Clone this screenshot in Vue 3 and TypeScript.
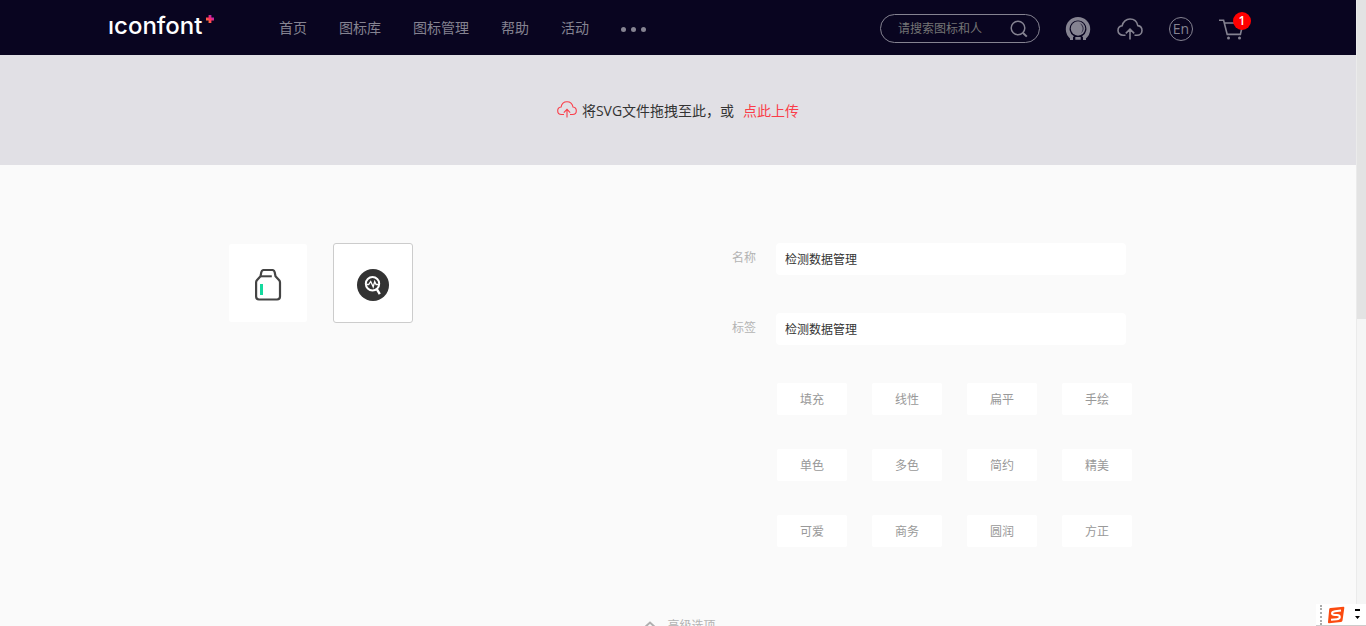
<script setup lang="ts">
import { ref } from 'vue'

interface NavItem {
  label: string
  href: string
}

const navItems: NavItem[] = [
  { label: '首页', href: '#home' },
  { label: '图标库', href: '#library' },
  { label: '图标管理', href: '#manage' },
  { label: '帮助', href: '#help' },
  { label: '活动', href: '#events' },
]

const tags: string[] = [
  '填充', '线性', '扁平', '手绘',
  '单色', '多色', '简约', '精美',
  '可爱', '商务', '圆润', '方正',
]

const keyword = ref('')
const iconName = ref('检测数据管理')
const iconTags = ref('检测数据管理')
const selectedIcon = ref(1)
const chosen = ref<string[]>([])

function toggleTag(tag: string): void {
  chosen.value = chosen.value.includes(tag)
    ? chosen.value.filter((t) => t !== tag)
    : [...chosen.value, tag]
}
</script>

<template>
  <div class="window">
    <div class="page">
      <header class="header">
        <div class="header-inner">
          <a class="logo" href="#home" aria-label="iconfont+">
            <span>ıconfont</span>
            <svg class="logo-plus" width="8" height="8" viewBox="0 0 8 8" aria-hidden="true">
              <defs>
                <linearGradient id="plus" x1="0" y1="1" x2="1" y2="0">
                  <stop offset="0.1" stop-color="#ff8a2a" />
                  <stop offset="0.5" stop-color="#ff2f63" />
                  <stop offset="0.9" stop-color="#a01fd0" />
                </linearGradient>
              </defs>
              <path d="M2.6 0h2.8v2.6H8v2.8H5.4V8H2.6V5.4H0V2.6h2.6z" fill="url(#plus)" />
            </svg>
          </a>
          <nav class="nav">
            <a v-for="item in navItems" :key="item.label" :href="item.href">{{ item.label }}</a>
            <button class="more" type="button" aria-label="更多">
              <i></i><i></i><i></i>
            </button>
          </nav>
          <form class="search" @submit.prevent>
            <input v-model="keyword" type="text" placeholder="请搜索图标和人" aria-label="搜索" />
            <button type="submit" aria-label="搜索">
              <svg width="18" height="18" viewBox="0 0 18 18" fill="none" stroke="#858391">
                <circle cx="8" cy="8" r="6.8" stroke-width="1.5" />
                <path d="M12.8 12.8l4 3.8" stroke-width="2" />
              </svg>
            </button>
          </form>
          <div class="tools">
            <a href="#me" aria-label="我的">
              <svg width="26" height="26" viewBox="0 0 26 26">
                <path d="M5 22.500A12.200 12.200 0 1 1 21 22.500V24h-3v-2.800l-1-.9a8.400 8.400 0 1 0-8 0l-1 .9V24H5z" fill="#858391" />
                <circle cx="13" cy="12.500" r="7.200" fill="#858391" />
                <path d="M14.500 7.200c2.800.8 4.300 3 4.100 5.600-.2 2.300-1.400 3.800-3 4.600 1.500-1.500 2-3 2-4.800 0-2.200-1.100-4-3.100-5.400z" fill="#2b2840" />
                <path d="M10.300 21h5.400v2.800h-5.400z" fill="#858391" />
              </svg>
            </a>
            <a href="#upload" aria-label="上传">
              <svg width="26" height="22" viewBox="0 0 26 22" fill="none" stroke="#858391" stroke-width="1.600">
                <path d="M8.500 17.200H6.200C3.200 17.200 1 15.200 1 12.400 1 9.800 2.800 8 5.200 7.700 5.900 3.800 9.200 1 13 1s7 2.600 7.800 6.600c2.400.3 4.200 2.200 4.200 4.800 0 2.800-2.200 4.800-5 4.800h-2.500M13 21.500V11.500M8.800 15.400L13 11.200l4.200 4.200" />
              </svg>
            </a>
            <a class="lang" href="#en">En</a>
            <a class="cart" href="#cart" aria-label="购物车">
              <svg width="25" height="22" viewBox="0 0 25 22" fill="none" stroke="#858391" stroke-width="1.600">
                <path d="M0 2.200h4.600L8.200 16.400h13.200L24 5H5.800" />
                <circle cx="9.500" cy="20" r="1.500" fill="#858391" stroke="none" />
                <circle cx="20.500" cy="20" r="1.500" fill="#858391" stroke="none" />
              </svg>
              <span class="badge">1</span>
            </a>
          </div>
        </div>
      </header>

      <section class="dropzone">
        <svg width="20" height="18" viewBox="0 0 20 18" fill="none" stroke="#fa3d49" stroke-width="1.100">
          <path d="M7 13.500H4.600C2.300 13.500.7 11.900.7 9.700c0-2 1.400-3.500 3.400-3.700C4.600 3 7 .8 10 .8s5.400 2 6 5.200c1.900.2 3.300 1.700 3.300 3.700 0 2.200-1.600 3.800-3.800 3.800H13M10 16.500V8.500M6.800 11.600L10 8.400l3.200 3.200" />
        </svg>
        <span class="drop-text">将SVG文件拖拽至此，或</span>
        <a href="#pick">点此上传</a>
      </section>

      <main class="editor">
        <div class="icons">
          <button
            type="button"
            :class="['icon-card', { active: selectedIcon === 0 }]"
            aria-label="瓶子"
            @click="selectedIcon = 0"
          >
            <svg width="32" height="32" viewBox="0 0 32 32" fill="none">
              <path d="M8.500 7.300L9.300 3.200Q9.800 1 12 1h8q2.200 0 2.700 2.200l.8 4.100 3.700 3.900q.8.9.8 2.200v14.200q0 2.900-2.900 2.900H7q-2.900 0-2.900-2.900V13.400q0-1.300.8-2.200z" stroke="#444" stroke-width="2.200" />
              <path d="M9 7.300h10.800" stroke="#444" stroke-width="2" />
              <path d="M8 15h3v11H8z" fill="#14d99e" />
            </svg>
          </button>
          <button
            type="button"
            :class="['icon-card', { active: selectedIcon === 1 }]"
            aria-label="检测数据管理"
            @click="selectedIcon = 1"
          >
            <svg width="32" height="32" viewBox="0 0 32 32" fill="none">
              <circle cx="16" cy="16" r="16" fill="#333" />
              <circle cx="15.500" cy="14.800" r="6.700" stroke="#fff" stroke-width="2" />
              <path d="M9.500 15.500h2.200l2-3 2.500 5.300 1.500-5.300 1.400 3h2.400" stroke="#fff" stroke-width="1.300" />
              <path d="M19.800 20.200l3 5" stroke="#fff" stroke-width="2.400" />
            </svg>
          </button>
        </div>

        <form class="form" @submit.prevent>
          <label for="icon-name">名称</label>
          <input id="icon-name" v-model="iconName" type="text" />
          <label for="icon-tags">标签</label>
          <input id="icon-tags" v-model="iconTags" type="text" />
          <div class="tags">
            <button
              v-for="tag in tags"
              :key="tag"
              type="button"
              :aria-pressed="chosen.includes(tag)"
              @click="toggleTag(tag)"
            >{{ tag }}</button>
          </div>
        </form>
      </main>

      <button class="advanced" type="button">
        <svg width="16" height="10" viewBox="0 0 16 10" fill="none" stroke="#b0b0b0" stroke-width="2">
          <path d="M1 8L8 1.500 15 8" />
        </svg>
        <span>高级选项</span>
      </button>
    </div>

    <div class="scrollbar"><div class="thumb"></div></div>

    <div class="ime">
      <span class="grip"></span>
      <svg width="18" height="18" viewBox="0 0 18 18" fill="none">
        <path d="M3.500 2L16.500.8Q17.500.8 17.300 2L15.500 14.500Q15.300 15.800 14 16L2 17.300Q.8 17.300 1 16L2.200 3.300Q2.400 2.100 3.500 2z" fill="#fb4b10" />
        <path d="M14 4.500L8 5.200Q5 5.600 5 7.300t3 1.700l2 .1q3 .1 2.800 2T9.800 13.200L4 13.800" stroke="#fff" stroke-width="2" />
      </svg>
      <svg width="7" height="11" viewBox="0 0 7 11" fill="#000">
        <path d="M1 0h5v2H1zM1 7h5L3.500 10z" />
      </svg>
    </div>
  </div>
</template>

<style>
html,
body,
#app {
  height: 100%;
}

body {
  margin: 0;
  overflow: hidden;
}
</style>

<style scoped>
.window {
  position: relative;
  display: flex;
  height: 100%;
  overflow: hidden;
  background: #fafafa;
  color: #333;
  font: 12px/18px "Open Sans", "Noto Sans CJK SC", sans-serif;
}

.page {
  flex: 1;
  min-width: 0;
  overflow: hidden;
}

a {
  text-decoration: none;
}

button,
input {
  box-sizing: border-box;
  margin: 0;
  padding: 0;
  border: 0;
  background: none;
  color: inherit;
  font: inherit;
}

button {
  cursor: pointer;
}

svg {
  display: block;
  flex: none;
}

.header {
  background: #090520;
}

.header-inner {
  display: flex;
  align-items: center;
  max-width: 1140px;
  height: 55px;
  margin: 0 auto;
}

.logo {
  display: flex;
  width: 171px;
  gap: 4px;
  padding-bottom: 4px;
  color: #fff;
  font: 500 24px/30px Inter, sans-serif;
}

.logo-plus {
  margin-top: 4px;
}

.nav {
  display: flex;
  align-items: center;
  gap: 32px;
  font-size: 14px;
  line-height: 20px;
}

.nav a {
  color: #858391;
}

.more {
  display: flex;
  gap: 5px;
  padding-top: 4px;
}

.more i {
  width: 5px;
  height: 5px;
  border-radius: 50%;
  background: #858391;
}

.search {
  display: flex;
  align-items: center;
  box-sizing: border-box;
  width: 160px;
  height: 29px;
  margin: 2px 0 0 auto;
  padding: 0 11px 0 17px;
  border: 1px solid #858391;
  border-radius: 15px;
}

.search input {
  flex: 1;
  min-width: 0;
  color: #858391;
  outline: none;
}

.search input::placeholder {
  color: #757575;
  opacity: 1;
}

.tools {
  display: flex;
  align-items: center;
  gap: 26px;
  margin: 2px 4px 0 25px;
}

.lang {
  box-sizing: border-box;
  width: 24px;
  height: 24px;
  border: 1px solid #858391;
  border-radius: 50%;
  color: #858391;
  font-size: 14px;
  line-height: 22px;
  text-align: center;
}

.cart {
  position: relative;
}

.badge {
  position: absolute;
  top: -6px;
  right: -7px;
  width: 18px;
  height: 18px;
  border-radius: 50%;
  background: #f00;
  color: #fff;
  font-weight: 600;
  text-align: center;
}

.dropzone {
  display: flex;
  align-items: center;
  justify-content: center;
  height: 110px;
  background: #e1e0e5;
  font-size: 14px;
  line-height: 20px;
}

.drop-text {
  margin: 0 9px 0 5px;
}

.drop-text,
.dropzone a {
  padding-top: 2px;
}

.dropzone a {
  color: #fa3d49;
}

.editor {
  display: flex;
  justify-content: space-between;
  max-width: 900px;
  margin: 0 auto;
  padding-top: 78px;
}

.icons {
  display: flex;
  align-items: flex-start;
  gap: 25px;
}

.icon-card {
  display: grid;
  place-items: center;
  width: 80px;
  height: 80px;
  padding-top: 4px;
  border: 1px solid #fafafa;
  border-radius: 3px;
  background: #fff;
}

.icon-card.active {
  border-color: #ccc;
}

.form {
  display: grid;
  grid-template-columns: 24px 350px;
  column-gap: 20px;
  row-gap: 38px;
  margin-right: 2px;
}

.form label {
  color: #b3b3b3;
  line-height: 30px;
}

.form input {
  height: 32px;
  padding: 0 9px;
  border-radius: 4px;
  background: #fff;
  outline: none;
}

.tags {
  grid-column: 2;
  display: grid;
  grid-template-columns: repeat(4, 70px);
  gap: 34px 25px;
  margin-left: 1px;
}

.tags button {
  height: 32px;
  padding-top: 2px;
  border-radius: 2px;
  background: #fff;
  color: #999;
}

.advanced {
  display: flex;
  align-items: center;
  gap: 9px;
  margin: 70px auto 0;
  padding-left: 2px;
  color: #b3b3b3;
}

.scrollbar {
  flex: none;
  box-sizing: border-box;
  width: 10px;
  border-left: 1px solid #ebebeb;
  background: #f5f5f5;
}

.thumb {
  height: 51%;
  background: #e3e3e3;
}

.ime {
  position: absolute;
  right: 0;
  bottom: 0;
  display: flex;
  align-items: center;
  box-sizing: border-box;
  width: 50px;
  height: 22px;
  padding: 0 4px;
  gap: 9px;
  border-bottom: 1px solid #ccc;
  background: #fff;
}

.grip {
  flex: none;
  width: 0;
  height: 20px;
  margin-right: -4px;
  border-left: 2px dotted #aaa;
}
</style>
